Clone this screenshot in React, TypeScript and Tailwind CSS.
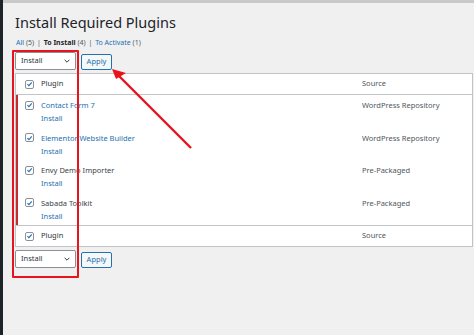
const plugins = [
  { name: "Contact Form 7", link: true, source: "WordPress Repository" },
  { name: "Elementor Website Builder", link: true, source: "WordPress Repository" },
  { name: "Envy Demo Importer", link: false, source: "Pre-Packaged" },
  { name: "Sabada Toolkit", link: false, source: "Pre-Packaged" },
];

function Check() {
  return (
    <span className="flex h-[9px] w-[9px] items-center justify-center rounded-[2px] border border-[#8c8f94] bg-white">
      <svg viewBox="0 0 10 10" className="h-[8px] w-[8px]">
        <path d="M2 5.2 L4.2 7.3 L8.2 2.6" fill="none" stroke="#2271b1" strokeWidth="1.6" />
      </svg>
    </span>
  );
}

function BulkActions() {
  return (
    <div className="flex items-start gap-[5px]">
      <div className="flex h-[18px] w-[61px] items-center justify-between rounded-[2px] border border-[#8c8f94] bg-white pl-[5px] pr-[5px] text-[7.5px] text-[#2c3338]">
        <span>Install</span>
        <svg viewBox="0 0 10 6" className="h-[4px] w-[6px]">
          <path d="M1 1 L5 5 L9 1" fill="none" stroke="#2c3338" strokeWidth="1.6" />
        </svg>
      </div>
      <div className="mt-[2px] flex h-[16px] w-[31px] items-center justify-center rounded-[2px] border border-[#2271b1] bg-[#f6f7f7] text-[7.5px] text-[#2271b1]">
        Apply
      </div>
    </div>
  );
}

function HeadRow({ top }: { top?: boolean }) {
  return (
    <div
      className={
        "grid h-[21px] grid-cols-[25px_321px_1fr] items-center text-[7.5px] text-[#2c3338] " +
        (top ? "border-b border-[#c3c4c7]" : "border-t border-[#c3c4c7]")
      }
    >
      <div className="pl-[9px]">
        <Check />
      </div>
      <div>Plugin</div>
      <div className="text-[#50575e]">Source</div>
    </div>
  );
}

export default function App() {
  return (
    <div className="relative flex h-[335px] w-[474px] overflow-hidden bg-[#f0f0f1] font-['Noto_Sans',sans-serif]">
      <div className="w-[3px] shrink-0 bg-[#1d2327]" />
      <div className="flex flex-1 flex-col">
        <div className="h-[3px] bg-[#c9c9cb]" />
        <div className="pl-[12px] pr-[1px]">
          <h1 className="mt-[11px] text-[14.5px] leading-[16px] text-[#1d2327]">Install Required Plugins</h1>
          <div className="mt-[8px] pl-[1px] text-[7px] leading-[10px] text-[#50575e]">
            <span className="text-[#2271b1]">All</span> (5) <span className="px-[1px]">|</span>{" "}
            <span className="font-bold text-[#1d2327]">To Install</span> (4){" "}
            <span className="px-[1px]">|</span> <span className="text-[#2271b1]">To Activate</span> (1)
          </div>
          <div className="mt-[4px]">
            <BulkActions />
          </div>

          <div className="mt-[3px] border border-[#c3c4c7] bg-white">
            <HeadRow top />
            {plugins.map((p) => (
              <div
                key={p.name}
                className="grid h-[32.5px] grid-cols-[25px_321px_1fr] items-start pt-[5px] text-[7.5px] leading-[10px] shadow-[inset_2px_0_0_#c42b2e]"
              >
                <div className="flex h-[10px] items-center pl-[9px]">
                  <Check />
                </div>
                <div>
                  <div className={p.link ? "text-[#2271b1]" : "text-[#3c434a]"}>{p.name}</div>
                  <div className="mt-[3px] text-[#2271b1]">Install</div>
                </div>
                <div className="text-[#50575e]">{p.source}</div>
              </div>
            ))}
            <HeadRow />
          </div>

          <div className="mt-[3px]">
            <BulkActions />
          </div>
        </div>
      </div>

      <div className="absolute left-[12px] top-[50px] h-[228px] w-[67px] rounded-[1px] border-2 border-[#e8141c]" />
      <svg className="absolute left-0 top-0" width="474" height="335" viewBox="0 0 474 335">
        <line x1="191" y1="148" x2="119" y2="76" stroke="#e8141c" strokeWidth="2.4" />
        <polygon points="112,69 126,73 116,79" fill="#e8141c" />
      </svg>
    </div>
  );
}
